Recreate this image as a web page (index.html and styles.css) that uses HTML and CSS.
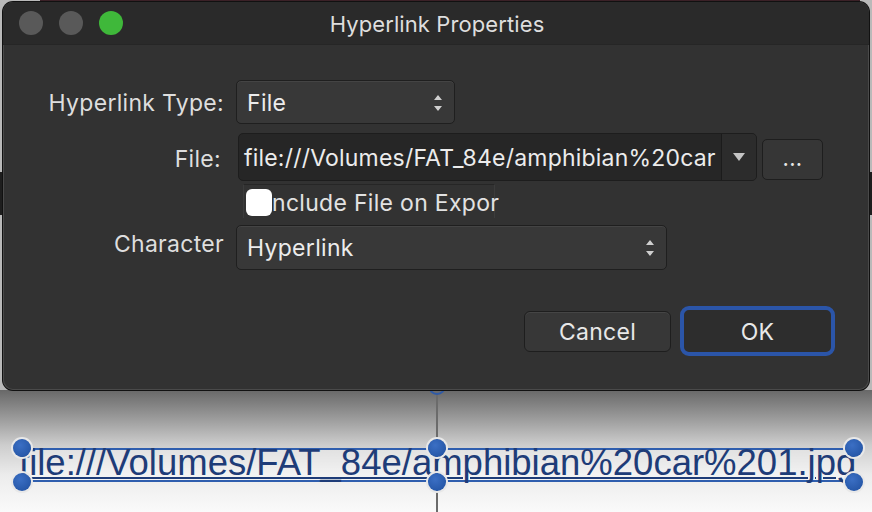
FILE: index.html
```html
<!DOCTYPE html>
<html>
<head>
<meta charset="utf-8">
<link rel="stylesheet" href="styles.css">
</head>
<body>
<div class="topstrip"></div>
<div class="dialog">
  <div class="titlebar">
    <div class="lights">
      <span class="light"></span><span class="light"></span><span class="light green"></span>
    </div>
    <div class="title">Hyperlink Properties</div>
    <div></div>
  </div>
  <div class="form">
    <div class="lbl">Hyperlink Type:</div>
    <div class="popup popup-type">
      <span>File</span>
      <svg class="updown" width="10" height="18" viewBox="0 0 10 18"><path d="M5 1 L9 6 L1 6 Z M5 17 L9 12 L1 12 Z" fill="#cfcfcf"/></svg>
    </div>

    <div class="lbl lbl-file">File:</div>
    <div class="file-row">
      <div class="combo">
        <span class="combo-text">file:///Volumes/FAT_84e/amphibian%20car</span>
        <span class="combo-arrow"><svg width="14" height="10" viewBox="0 0 14 10"><path d="M1 1 L13 1 L7 9 Z" fill="#c4c4c4"/></svg></span>
      </div>
      <div class="dots">...</div>
    </div>

    <div></div>
    <div class="check-row"><span class="checkbox"></span><span class="check-text">nclude File on Expor</span></div>

    <div class="lbl lbl-char">Character</div>
    <div class="popup popup-char">
      <span>Hyperlink</span>
      <svg class="updown" width="10" height="18" viewBox="0 0 10 18"><path d="M5 1 L9 6 L1 6 Z M5 17 L9 12 L1 12 Z" fill="#cfcfcf"/></svg>
    </div>
  </div>
  <div class="buttons">
    <div class="btn cancel">Cancel</div>
    <div class="btn ok">OK</div>
  </div>
</div>
<div class="canvas">
  <div class="vline"></div>
  <div class="rot-handle"></div>
  <div class="textobj">
    <span class="link">file:///Volumes/FAT_84e/amphibian%20car%201.jpg</span>
    <span class="h h-tl"></span><span class="h h-bl"></span>
    <span class="h h-tm"></span><span class="h h-bm"></span>
    <span class="h h-tr"></span><span class="h h-br"></span>
  </div>
</div>
</body>
</html>
```

FILE: styles.css
```css
* { box-sizing: border-box; }
html, body { margin: 0; padding: 0; }
body {
  width: 872px;
  height: 512px;
  overflow: hidden;
  font-family: "Inter", "Open Sans", "DejaVu Sans", sans-serif;
  background: linear-gradient(to bottom, #b9b9b9 0, #b9b9b9 172px, #1e1e1e 172px, #1e1e1e 215px, #b9b9b9 215px);
}
.topstrip {
  height: 2px;
  margin-left: 40px;
  margin-right: 12px;
  background: #3b2127;
}
.dialog {
  position: relative;
  z-index: 2;
  margin: 0 3px;
  height: 388px;
  background: #323232;
  border-radius: 10px;
  box-shadow: 0 0 0 1px #111, inset 0 0 0 1px #4a4a4a;
  overflow: hidden;
}
.titlebar {
  height: 43px;
  display: grid;
  grid-template-columns: 1fr auto 1fr;
  align-items: center;
  background: #2a2a2a;
  border-bottom: 1px solid #262626;
}
.lights {
  display: flex;
  gap: 16px;
  padding-left: 16px;
}
.light {
  width: 24px;
  height: 24px;
  border-radius: 50%;
  background: #595959;
}
.light.green { background: #3fb83a; }
.title {
  color: #dedede;
  font-size: 22px;
  letter-spacing: 0.1px;
  padding: 2px 0 0 2px;
}
.form {
  display: grid;
  grid-template-columns: 221px 1fr;
  column-gap: 12px;
  align-items: center;
  padding-top: 35px;
  color: #dedede;
  font-size: 23px;
  letter-spacing: 0.3px;
}
.lbl {
  text-align: right;
  padding-top: 2px;
}
.lbl-file { padding: 12px 3px 0 0; }
.lbl-char { padding-top: 0; }
.popup {
  display: flex;
  align-items: center;
  justify-content: space-between;
  background: #383838;
  border: 1px solid #1f1f1f;
  border-radius: 5px;
  box-shadow: inset 0 1px 0 #444;
  padding: 1px 11px 0 10px;
  color: #ececec;
}
.popup-type { width: 219px; height: 44px; }
.popup-char { width: 431px; height: 45px; margin-top: 7px; }
.updown { display: block; }
.file-row {
  display: flex;
  align-items: center;
  gap: 5px;
  margin-top: 9px;
  margin-left: 2px;
}
.combo {
  display: flex;
  width: 519px;
  height: 48px;
  border: 1px solid #1d1d1d;
  border-radius: 5px;
  background: #262626;
  overflow: hidden;
}
.combo-text {
  flex: 1;
  display: flex;
  align-items: center;
  padding: 1px 0 0 5px;
  color: #ececec;
  white-space: nowrap;
  overflow: hidden;
  letter-spacing: 0.2px;
}
.combo-arrow {
  width: 35px;
  flex: none;
  display: flex;
  align-items: center;
  justify-content: center;
  background: #2c2c2c;
  border-left: 1px solid #1b1b1b;
}
.dots {
  width: 61px;
  height: 41px;
  margin-top: 4px;
  display: flex;
  align-items: center;
  justify-content: center;
  background: #363636;
  border: 1px solid #1e1e1e;
  border-radius: 5px;
  color: #e6e6e6;
  font-size: 22px;
  padding-bottom: 2px;
}
.check-row {
  display: flex;
  align-items: center;
  width: 252px;
  height: 34px;
  margin-top: 3px;
  margin-left: 7px;
  padding: 2px 0 0 2px;
  border-top: 1px solid #262626;
  border-left: 1px solid #3c3c3c;
  border-right: 1px solid #3c3c3c;
  color: #e2e2e2;
  white-space: nowrap;
}
.checkbox {
  width: 26px;
  height: 27px;
  border-radius: 6px;
  background: #ffffff;
  flex: none;
}
.check-text { margin-left: 0; }
.buttons {
  display: flex;
  justify-content: flex-end;
  align-items: center;
  gap: 9px;
  padding: 36px 34px 0 0;
}
.btn {
  display: flex;
  align-items: center;
  justify-content: center;
  color: #e8e8e8;
  font-size: 23px;
  letter-spacing: 0.3px;
  padding-top: 2px;
}
.cancel {
  width: 147px;
  height: 41px;
  background: #373737;
  border: 1px solid #1e1e1e;
  border-radius: 6px;
  box-shadow: inset 0 1px 0 #454545;
}
.ok {
  width: 155px;
  height: 50px;
  background: #2d2d2d;
  border: 4px solid #2b55a8;
  border-radius: 9px;
}
.canvas {
  position: relative;
  height: 122px;
  background: linear-gradient(to bottom, #686868 0, #9e9e9e 30px, #cdcdcd 55px, #ececec 85px, #fafafa 122px);
}
.vline {
  position: absolute;
  left: 436px;
  top: 0;
  width: 2px;
  height: 122px;
  background: #6b6b6b;
}
.rot-handle {
  position: absolute;
  left: 428px;
  top: -13px;
  width: 18px;
  height: 18px;
  border-radius: 50%;
  border: 2px solid #2f5aa6;
}
.textobj {
  position: absolute;
  left: 22px;
  top: 58px;
  width: 832px;
  height: 34px;
  border-top: 2px solid #2f5eae;
  border-bottom: 2px solid #2f5eae;
  background: rgba(255,255,255,0.35);
}
.link {
  display: block;
  margin-left: -3px;
  margin-top: -2px;
  font-family: "Liberation Sans", Arial, sans-serif;
  font-size: 36.5px;
  line-height: 30px;
  color: #1e3c78;
  text-decoration: underline;
  text-decoration-thickness: 2px;
  text-underline-offset: 2px;
  white-space: nowrap;
}
.h {
  position: absolute;
  width: 18px;
  height: 18px;
  border-radius: 50%;
  background: radial-gradient(circle at 40% 35%, #3b6fc4, #1f4f9e);
  box-shadow: 0 0 0 2px #e8e8e8;
}
.h-tl { left: -9px; top: -11px; }
.h-bl { left: -9px; bottom: -11px; }
.h-tm { left: 406px; top: -11px; }
.h-bm { left: 406px; bottom: -11px; }
.h-tr { right: -9px; top: -11px; }
.h-br { right: -9px; bottom: -11px; }
```
